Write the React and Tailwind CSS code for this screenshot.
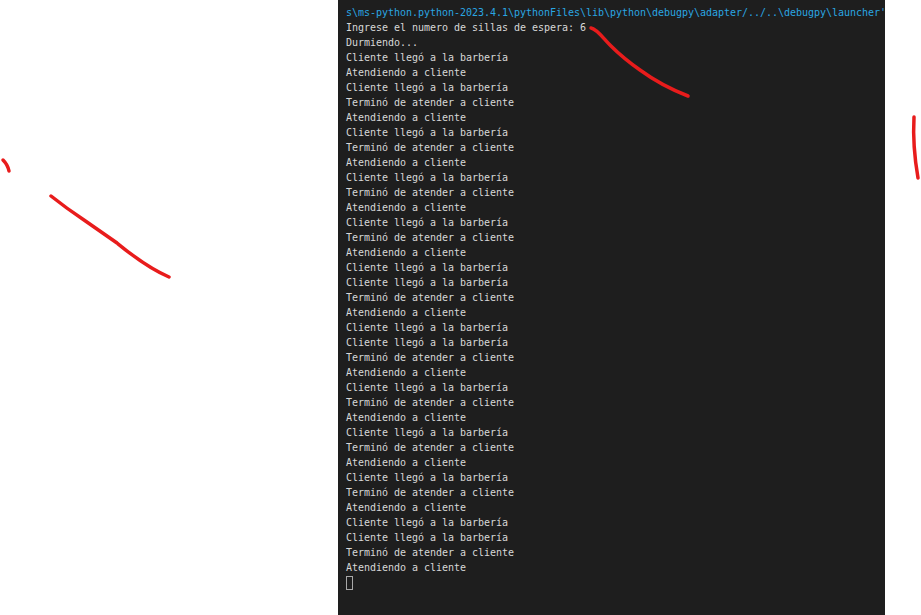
const CLIENT = "Cliente llegó a la barbería"
const SERVING = "Atendiendo a cliente"
const DONE = "Terminó de atender a cliente"

const OUTPUT = [
  "Ingrese el numero de sillas de espera: 6",
  "Durmiendo...",
  CLIENT, SERVING,
  CLIENT, DONE, SERVING,
  CLIENT, DONE, SERVING,
  CLIENT, DONE, SERVING,
  CLIENT, DONE, SERVING,
  CLIENT, CLIENT, DONE, SERVING,
  CLIENT, CLIENT, DONE, SERVING,
  CLIENT, DONE, SERVING,
  CLIENT, DONE, SERVING,
  CLIENT, DONE, SERVING,
  CLIENT, CLIENT, DONE, SERVING,
]

// Red pen marks drawn on top of the screenshot.
const STROKES = [
  "M591 28 C597 29 603 38 611 46 C620 55 630 63 640 70 C655 81 670 89 688 96",
  "M914 117 C913 135 914 155 918 178",
  "M3 160 C6 163 8 166 9 171",
  "M51 196 C61 204 72 212 84 220 L117 243 C128 252 146 267 169 277",
]

export default function App() {
  return (
    <div className="relative h-[615px] w-[921px] overflow-hidden bg-white">
      <div className="ml-[338px] h-full w-[547px] bg-[#1e1e1e] pl-2 pt-[5px] font-['DejaVu_Sans_Mono','Liberation_Mono',monospace] text-[10px] leading-[15px] tracking-[-0.02px] text-[#d8d8d8]">
        <div className="whitespace-pre text-[#2aa6e2]">
          {"s\\ms-python.python-2023.4.1\\pythonFiles\\lib\\python\\debugpy\\adapter/../..\\debugpy\\launcher'"}
        </div>
        {OUTPUT.map((line, i) => (
          <div key={i} className="whitespace-pre">{line}</div>
        ))}
        <div className="mt-px h-[14px] w-[7px] border border-[#a8a8a8]" />
      </div>

      <svg className="pointer-events-none absolute inset-0" width="921" height="615" fill="none">
        {STROKES.map((d) => (
          <path key={d} d={d} stroke="#e81c1c" strokeWidth="3.5" strokeLinecap="round" />
        ))}
      </svg>
    </div>
  )
}
